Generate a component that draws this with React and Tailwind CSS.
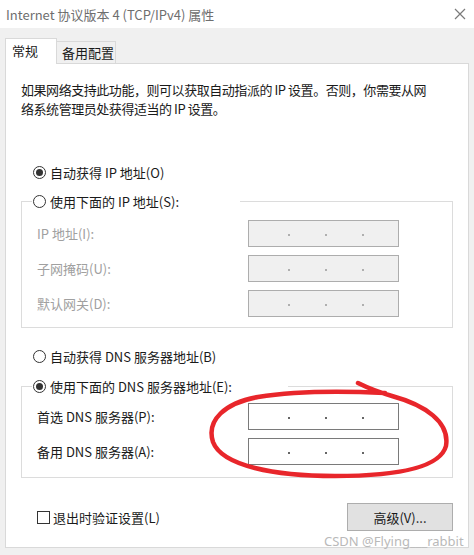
import React from "react";

const FONT = "font-['Noto_Sans_CJK_SC','Noto_Sans',sans-serif]";

// ─── Small controls ──────────────────────────────────────
const Radio = ({ checked }) => (
  <span className="w-[13px] h-[13px] rounded-full border border-[#333333] bg-white flex items-center justify-center shrink-0">
    {checked && <span className="w-[7px] h-[7px] rounded-full bg-[#333333]" />}
  </span>
);

const IpBox = ({ disabled }) => (
  <div
    className={`h-[27px] w-[151px] border flex items-center pl-[39px] gap-[35px] ${
      disabled ? "bg-[#f0f0f0] border-[#adadad]" : "bg-white border-[#7a7a7a]"
    }`}
  >
    {[0, 1, 2].map((i) => (
      <span
        key={i}
        className={`w-[2px] h-[2px] mt-[3px] rounded-full ${
          disabled ? "bg-[#9a9a9a]" : "bg-[#333333]"
        }`}
      />
    ))}
  </div>
);

const FieldRow = ({ label, disabled }) => (
  <>
    <div
      className={`h-[27px] flex items-center ${
        disabled ? "text-[#a0a0a0]" : "text-[#1a1a1a]"
      }`}
    >
      {label}
    </div>
    <IpBox disabled={disabled} />
  </>
);

// ─── Group box with radio legend ─────────────────────────
const GroupBox = ({ legend, checked, legendWidth, height, padTop, rows, disabled }) => (
  <div
    className={`relative w-[432px] border border-[#dcdcdc] ${height} ${padTop} pl-[15px]`}
  >
    <div
      className={`absolute -top-[11px] left-[10px] h-[20px] bg-white flex items-center gap-[4px] pl-[1px] ${legendWidth}`}
    >
      <Radio checked={checked} />
      <span className="text-[#1a1a1a]">{legend}</span>
    </div>
    <div className="grid grid-cols-[211px_151px] gap-y-[8px]">
      {rows.map((r) => (
        <FieldRow key={r} label={r} disabled={disabled} />
      ))}
    </div>
  </div>
);

export default function App() {
  return (
    <div
      className={`relative w-[474px] h-[555px] bg-[#f0f0f0] overflow-hidden text-[13px] leading-[19px] ${FONT}`}
    >
      {/* Title bar */}
      <div className="h-[28px] bg-white flex items-center justify-between pl-[6px] pr-[8px]">
        <span className="text-[#6e6e6e]">Internet 协议版本 4 (TCP/IPv4) 属性</span>
        <svg width="12" height="12" viewBox="0 0 12 12" className="shrink-0">
          <path d="M1 1 L11 11 M11 1 L1 11" stroke="#7a7a7a" strokeWidth="1.2" />
        </svg>
      </div>

      {/* Tabs */}
      <div className="h-[35px] flex items-end pl-[5px]">
        <div className="relative z-10 -mb-px h-[26px] w-[52px] bg-white border border-b-0 border-[#d9d9d9] pl-[6px] pt-[2px] text-[#1a1a1a]">
          常规
        </div>
        <div className="h-[22px] w-[59px] border-t border-r border-[#d9d9d9] bg-[#f0f0f0] flex items-center pl-[5px] text-[#1a1a1a]">
          备用配置
        </div>
      </div>

      {/* Panel */}
      <div className="mx-[5px] h-[485px] bg-white border border-[#d9d9d9] pl-[15px] pr-[14px] pt-[16px] text-[#1a1a1a]">
        <p className="tracking-[-0.45px]">
          如果网络支持此功能，则可以获取自动指派的 IP 设置。否则，你需要从网
          <br />
          络系统管理员处获得适当的 IP 设置。
        </p>

        <div className="mt-[44px] h-[20px] flex items-center gap-[4px] pl-[12px]">
          <Radio checked />
          <span>自动获得 IP 地址(O)</span>
        </div>

        <div className="mt-[19px]">
          <GroupBox
            legend="使用下面的 IP 地址(S):"
            legendWidth="w-[208px]"
            height="h-[127px]"
            padTop="pt-[18px]"
            rows={["IP 地址(I):", "子网掩码(U):", "默认网关(D):"]}
            disabled
          />
        </div>

        <div className="mt-[18px] h-[20px] flex items-center gap-[4px] pl-[12px]">
          <Radio />
          <span>自动获得 DNS 服务器地址(B)</span>
        </div>

        <div className="mt-[20px]">
          <GroupBox
            legend="使用下面的 DNS 服务器地址(E):"
            checked
            legendWidth="w-[256px]"
            height="h-[92px]"
            padTop="pt-[16px]"
            rows={["首选 DNS 服务器(P):", "备用 DNS 服务器(A):"]}
          />
        </div>

        <div className="mt-[25px] w-[432px] h-[28px] flex items-center justify-between pl-[16px]">
          <div className="flex items-center gap-[3px]">
            <span className="w-[13px] h-[13px] border border-[#333333] bg-white" />
            <span>退出时验证设置(L)</span>
          </div>
          <button className="h-[28px] w-[106px] bg-[#e1e1e1] border border-[#adadad] text-[#1a1a1a]">
            高级(V)...
          </button>
        </div>
      </div>

      {/* Watermark */}
      <span className="absolute left-[324px] top-[532px] text-[13px] leading-[18px] text-[#b9b9b9] font-['Noto_Sans',sans-serif]">
        CSDN @Flying___rabbit
      </span>

      {/* Red hand-drawn circle */}
      <svg
        className="absolute inset-0 pointer-events-none"
        width="474"
        height="555"
        viewBox="0 0 474 555"
      >
        <path
          d="M358 383 C368 388 378 392 392 396 C425 405 450 422 446 446 C440 468 395 476 335 476 C275 476 222 466 213 442 C206 420 225 403 258 397 C295 391 345 391 385 393"
          fill="none"
          stroke="#e8262b"
          strokeWidth="4.5"
          strokeLinecap="round"
          strokeLinejoin="round"
        />
      </svg>
    </div>
  );
}
